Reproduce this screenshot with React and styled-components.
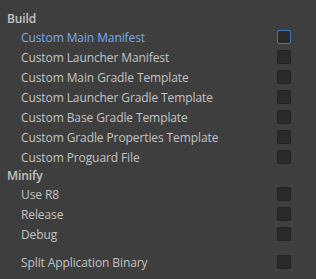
import React from "react";
import styled, { createGlobalStyle } from "styled-components";

const Global = createGlobalStyle`
  html, body { margin: 0; padding: 0; background: #3e3e3e; }
  body { font-family: "Open Sans", "Noto Sans", sans-serif; }
`;

const Panel = styled.div`
  width: 316px;
  height: 279px;
  box-sizing: border-box;
  padding: 10px 25px 0 7px;
  background: #3e3e3e;
  display: flex;
  flex-direction: column;
`;

const Header = styled.div`
  height: 17px;
  display: flex;
  align-items: center;
  font-size: 12px;
  font-weight: 600;
  letter-spacing: -0.1px;
  color: #c4c4c4;
`;

const Row = styled.div`
  height: 20px;
  display: flex;
  align-items: center;
  justify-content: space-between;
  padding-left: 14px;
  margin-top: ${(p) => (p.$gap ? "8px" : "0")};
`;

const Label = styled.span`
  font-size: 12px;
  letter-spacing: -0.1px;
  color: ${(p) => (p.$active ? "#7baaf0" : "#c4c4c4")};
`;

const Check = styled.span`
  width: 14px;
  height: 14px;
  box-sizing: border-box;
  border-radius: 2px;
  background: #2a2a2a;
  border: 1px solid ${(p) => (p.$focus ? "#3a79bb" : "#232323")};
`;

const build = [
  "Custom Main Manifest",
  "Custom Launcher Manifest",
  "Custom Main Gradle Template",
  "Custom Launcher Gradle Template",
  "Custom Base Gradle Template",
  "Custom Gradle Properties Template",
  "Custom Proguard File",
];
const minify = ["Use R8", "Release", "Debug"];

export default function App() {
  return (
    <>
      <Global />
      <Panel>
        <Header>Build</Header>
        {build.map((t, i) => (
          <Row key={t}>
            <Label $active={i === 0}>{t}</Label>
            <Check $focus={i === 0} />
          </Row>
        ))}
        <Header>Minify</Header>
        {minify.map((t) => (
          <Row key={t}>
            <Label>{t}</Label>
            <Check />
          </Row>
        ))}
        <Row $gap>
          <Label>Split Application Binary</Label>
          <Check />
        </Row>
      </Panel>
    </>
  );
}
